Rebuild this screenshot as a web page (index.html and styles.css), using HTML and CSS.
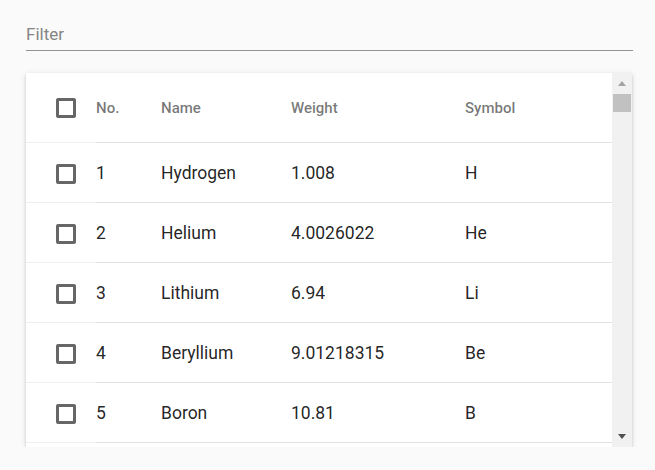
FILE: index.html
```html
<!DOCTYPE html>
<html>
<head>
<meta charset="utf-8">
<link rel="stylesheet" href="styles.css">
</head>
<body>
<div class="page">
  <div class="filter">Filter</div>
  <div class="card">
    <div class="table">
      <div class="row header">
        <div class="cell sel"><span class="box"></span></div>
        <div class="cell">No.</div>
        <div class="cell">Name</div>
        <div class="cell">Weight</div>
        <div class="cell">Symbol</div>
      </div>
      <div class="row">
        <div class="cell sel"><span class="box"></span></div>
        <div class="cell">1</div>
        <div class="cell">Hydrogen</div>
        <div class="cell">1.008</div>
        <div class="cell">H</div>
      </div>
      <div class="row">
        <div class="cell sel"><span class="box"></span></div>
        <div class="cell">2</div>
        <div class="cell">Helium</div>
        <div class="cell">4.0026022</div>
        <div class="cell">He</div>
      </div>
      <div class="row">
        <div class="cell sel"><span class="box"></span></div>
        <div class="cell">3</div>
        <div class="cell">Lithium</div>
        <div class="cell">6.94</div>
        <div class="cell">Li</div>
      </div>
      <div class="row">
        <div class="cell sel"><span class="box"></span></div>
        <div class="cell">4</div>
        <div class="cell">Beryllium</div>
        <div class="cell">9.01218315</div>
        <div class="cell">Be</div>
      </div>
      <div class="row">
        <div class="cell sel"><span class="box"></span></div>
        <div class="cell">5</div>
        <div class="cell">Boron</div>
        <div class="cell">10.81</div>
        <div class="cell">B</div>
      </div>
    </div>
    <div class="scrollbar">
      <svg class="arrow up" width="20" height="20" viewBox="0 0 20 20"><polygon points="6,13 14,13 10,8" fill="#a3a3a3"/></svg>
      <div class="track"><div class="thumb"></div></div>
      <svg class="arrow down" width="20" height="20" viewBox="0 0 20 20"><polygon points="6,7 14,7 10,12" fill="#505050"/></svg>
    </div>
  </div>
</div>
</body>
</html>
```

FILE: styles.css
```css
html, body {
  margin: 0;
  padding: 0;
  background: #fafafa;
}
body {
  font-family: Roboto, "Liberation Sans", sans-serif;
}
.page {
  padding: 24px 22px 0 26px;
}
.filter {
  font-size: 17px;
  line-height: 20px;
  color: #858585;
  padding-bottom: 6px;
  border-bottom: 1px solid #949494;
}
.card {
  margin-top: 22px;
  width: 606px;
  height: 374px;
  background: #fff;
  display: flex;
  box-shadow: 0 3px 2px -2px rgba(0,0,0,.22), 0 2px 3px 0 rgba(0,0,0,.14), 0 1px 6px 0 rgba(0,0,0,.1);
}
.table {
  flex: 1;
  overflow: hidden;
}
.row {
  display: grid;
  grid-template-columns: 70px 65px 130px 174px 1fr;
  height: 60px;
}
.row.header {
  height: 70px;
}
.cell {
  display: flex;
  align-items: center;
  border-bottom: 1px solid #e2e2e2;
  font-size: 17.5px;
  color: rgba(0,0,0,.87);
  box-sizing: border-box;
}
.header .cell {
  font-size: 15px;
  font-weight: 500;
  color: rgba(0,0,0,.54);
}
.cell.sel {
  padding-left: 30px;
  border-bottom-color: #efefef;
}
.box {
  display: block;
  width: 20px;
  height: 20px;
  box-sizing: border-box;
  border: 3px solid #666666;
  border-radius: 2px;
  margin-top: 2px;
}
.header .box {
  margin-top: 0;
}
.scrollbar {
  width: 20px;
  background: #f1f1f1;
  display: flex;
  flex-direction: column;
}
.arrow {
  display: block;
  flex: none;
}
.track {
  flex: 1;
  padding: 1px 1px 0 1px;
}
.thumb {
  height: 18px;
  background: #c1c1c1;
}
```
